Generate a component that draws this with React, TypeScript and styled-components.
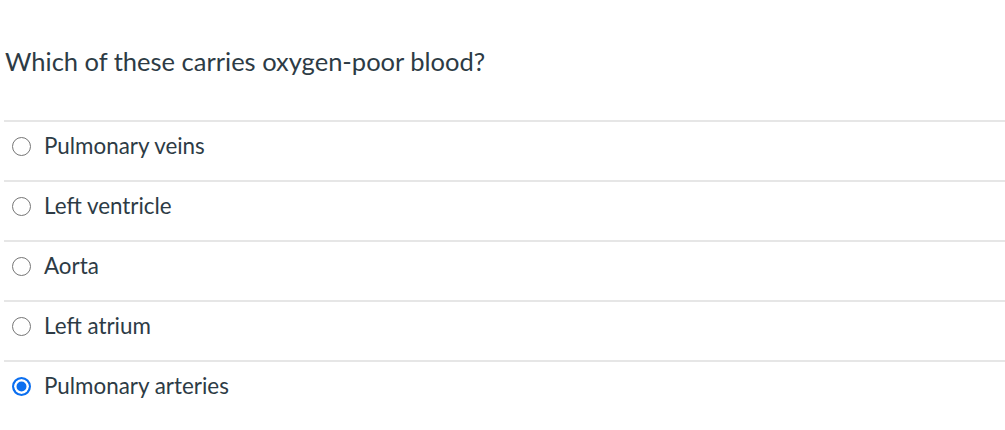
import styled, { createGlobalStyle } from 'styled-components';

const options = [
  'Pulmonary veins',
  'Left ventricle',
  'Aorta',
  'Left atrium',
  'Pulmonary arteries',
];

const selected = 'Pulmonary arteries';

export default function App() {
  return (
    <>
      <GlobalStyle />
      <QuizContainer>
        <Question>Which of these carries oxygen-poor blood?</Question>
        <AnswerList>
          {options.map((option) => (
            <AnswerRow key={option}>
              <Radio
                type="radio"
                name="answer"
                value={option}
                defaultChecked={option === selected}
              />
              <AnswerText>{option}</AnswerText>
            </AnswerRow>
          ))}
        </AnswerList>
      </QuizContainer>
    </>
  );
}

const GlobalStyle = createGlobalStyle`
  body {
    margin: 0;
    background: #ffffff;
    font-family: Lato, "Liberation Sans", sans-serif;
    color: #2d3b45;
  }
`;

const QuizContainer = styled.div`
  width: 100%;
  padding-left: 4px;
  box-sizing: border-box;
`;

const Question = styled.h2`
  margin: 0;
  padding: 46px 0 0 1px;
  height: 74px;
  font-size: 25.5px;
  font-weight: 400;
  line-height: 30px;
  color: #2d3b45;
`;

const AnswerList = styled.div`
  display: flex;
  flex-direction: column;
`;

const AnswerRow = styled.label`
  display: flex;
  align-items: center;
  gap: 13px;
  height: 60px;
  box-sizing: border-box;
  padding: 0 0 10px 8px;
  border-top: 2px solid #e6e6e6;
  cursor: pointer;
`;

const Radio = styled.input`
  appearance: none;
  margin: 0;
  width: 19px;
  height: 19px;
  flex-shrink: 0;
  border-radius: 50%;
  border: 1.5px solid #767676;
  background: #ffffff;
  box-sizing: border-box;

  &:checked {
    border: 2px solid #0b6ff0;
    background: #0b6ff0;
    box-shadow: inset 0 0 0 2.5px #ffffff;
  }
`;

const AnswerText = styled.span`
  font-size: 22.4px;
  line-height: 26px;
  color: #2d3b45;
`;
